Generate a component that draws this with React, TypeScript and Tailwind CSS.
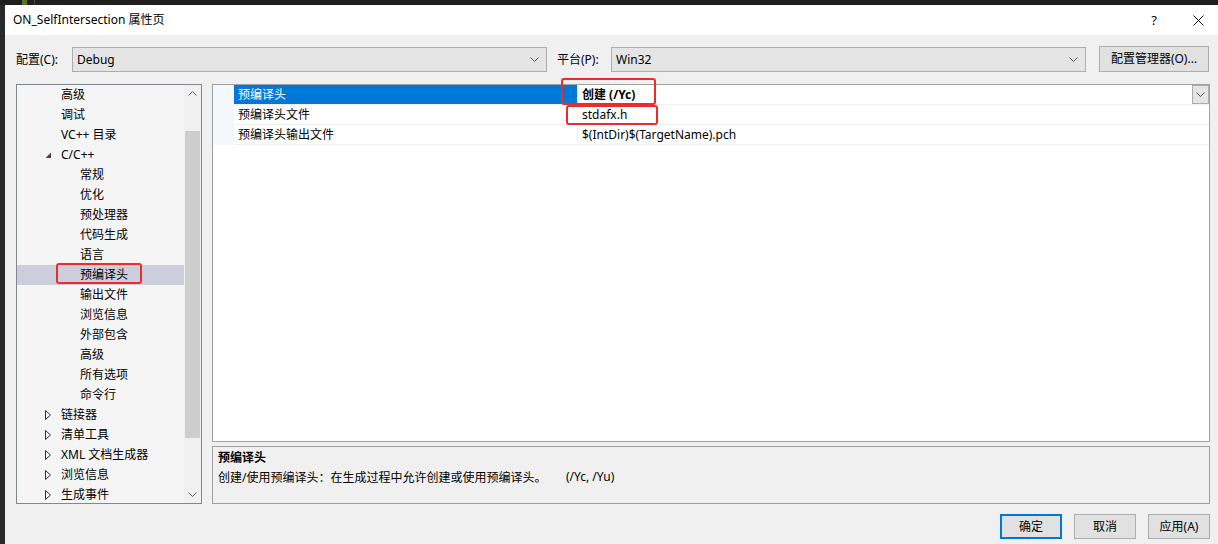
import React from "react";

type TreeItem = { label: string; level: 1 | 2; arrow?: "open" | "closed"; selected?: boolean };

const treeItems: TreeItem[] = [
  { label: "高级", level: 1 },
  { label: "调试", level: 1 },
  { label: "VC++ 目录", level: 1 },
  { label: "C/C++", level: 1, arrow: "open" },
  { label: "常规", level: 2 },
  { label: "优化", level: 2 },
  { label: "预处理器", level: 2 },
  { label: "代码生成", level: 2 },
  { label: "语言", level: 2 },
  { label: "预编译头", level: 2, selected: true },
  { label: "输出文件", level: 2 },
  { label: "浏览信息", level: 2 },
  { label: "外部包含", level: 2 },
  { label: "高级", level: 2 },
  { label: "所有选项", level: 2 },
  { label: "命令行", level: 2 },
  { label: "链接器", level: 1, arrow: "closed" },
  { label: "清单工具", level: 1, arrow: "closed" },
  { label: "XML 文档生成器", level: 1, arrow: "closed" },
  { label: "浏览信息", level: 1, arrow: "closed" },
  { label: "生成事件", level: 1, arrow: "closed" },
];

const props = [
  { name: "预编译头", value: "创建 (/Yc)", selected: true },
  { name: "预编译头文件", value: "stdafx.h" },
  { name: "预编译头输出文件", value: "$(IntDir)$(TargetName).pch" },
];

function Chevron({ up = false, className = "" }: { up?: boolean; className?: string }) {
  return (
    <svg width="9" height="5" viewBox="0 0 9 5" className={className}>
      <polyline
        points={up ? "0.5,4.5 4.5,0.5 8.5,4.5" : "0.5,0.5 4.5,4.5 8.5,0.5"}
        fill="none"
        stroke="currentColor"
        strokeWidth="1"
      />
    </svg>
  );
}

function Combo({ text, width }: { text: string; width: string }) {
  return (
    <div className={`${width} h-[25px] flex items-center justify-between border border-[#adadad] bg-[#e5e5e5] pl-[4px] pr-[7px]`}>
      <span>{text}</span>
      <Chevron className="text-[#555]" />
    </div>
  );
}

function Arrow({ kind }: { kind?: "open" | "closed" }) {
  if (kind === "open")
    return (
      <svg width="7" height="7" viewBox="0 0 7 7">
        <polygon points="6,0.5 6,6 0.5,6" fill="#444" />
      </svg>
    );
  if (kind === "closed")
    return (
      <svg width="7" height="10" viewBox="0 0 7 10">
        <polygon points="0.5,0.5 5.5,5 0.5,9.5" fill="none" stroke="#333" strokeWidth="1" />
      </svg>
    );
  return null;
}

function Tree() {
  return (
    <div className="w-[186px] h-[420px] flex border border-[#828790] bg-[#f5f5f5]">
      <div className="flex-1 overflow-hidden">
        {treeItems.map((it, i) => (
          <div
            key={i}
            className={`relative h-[20px] flex items-center ${it.level === 1 ? "pl-[28px]" : "pl-[47px]"} ${it.selected ? "bg-[#cccedb]" : ""}`}
          >
            <span className="w-[16px] flex items-center">
              <Arrow kind={it.arrow} />
            </span>
            <span className="whitespace-nowrap">{it.label}</span>
            {it.selected && (
              <div className="absolute left-[39px] top-[-2px] w-[86px] h-[21px] border-2 border-[#ee2b2b] rounded-[3px]" />
            )}
          </div>
        ))}
      </div>
      {/* scrollbar */}
      <div className="w-[17px] flex flex-col bg-[#f0f0f0]">
        <div className="h-[17px] flex items-center justify-center text-[#606060]">
          <Chevron up />
        </div>
        <div className="flex-1 px-[1px]">
          <div className="mt-[29px] h-[307px] bg-[#cdcdcd]" />
        </div>
        <div className="h-[17px] flex items-center justify-center text-[#606060]">
          <Chevron />
        </div>
      </div>
    </div>
  );
}

function PropertyGrid() {
  return (
    <div className="relative h-[358px] border border-[#a0a0a0] bg-white">
      <div>
        {props.map((p, i) => (
          <div key={i} className="flex h-[20px]">
            <div className="w-[21px] bg-[#f4f7fc]" />
            <div className="flex-1 flex border-b border-[#f0f0f0]">
              <div
                className={`w-[343px] pl-[4px] flex items-center ${p.selected ? "bg-[#0078d7] text-white" : ""}`}
              >
                {p.name}
              </div>
              <div className="flex-1 flex items-center justify-between border-l border-[#f0f0f0] pl-[4px]">
                <span className={p.selected ? "font-bold" : ""}>{p.value}</span>
                {p.selected && (
                  <div className="w-[17px] h-[19px] flex items-center justify-center border border-[#adadad] bg-[#e5e5e5] text-[#555]">
                    <Chevron />
                  </div>
                )}
              </div>
            </div>
          </div>
        ))}
      </div>
      {/* annotations */}
      <div className="absolute left-[348px] top-[-7px] w-[95px] h-[27px] border-2 border-[#ee2b2b] rounded-[3px]" />
      <div className="absolute left-[353px] top-[20px] w-[92px] h-[20px] border-2 border-[#ee2b2b] rounded-[3px]" />
    </div>
  );
}

function Btn({ children, primary = false }: { children: React.ReactNode; primary?: boolean }) {
  return (
    <div
      className={`w-[62px] h-[25px] flex items-center justify-center bg-[#e1e1e1] ${primary ? "border-2 border-[#0078d7]" : "border border-[#adadad]"}`}
    >
      {children}
    </div>
  );
}

export default function App() {
  return (
    <div className="w-[1218px] h-[544px] flex flex-col overflow-hidden bg-[#1f1f1f] text-[12px] leading-[16px] text-black font-['Noto_Sans','Noto_Sans_CJK_SC',sans-serif]">
      {/* host window edge */}
      <div className="h-[5px] flex pl-[22px]">
        <div className="w-[5px] bg-[#56742a]" />
        <div className="ml-[7px] w-[1px] bg-[#4a4a4a]" />
      </div>
      <div className="flex flex-1">
        <div className="w-[5px] bg-[#2a2a2c]" />
        <div className="flex-1 flex flex-col bg-[#f0f0f0]">
          {/* title bar */}
          <div className="h-[30px] flex items-center bg-white pl-[8px]">
            <span className="flex-1">ON_SelfIntersection 属性页</span>
            <div className="w-[44px] flex justify-center text-[13px]">?</div>
            <div className="w-[44px] flex justify-center mr-[-2px]">
              <svg width="11" height="11" viewBox="0 0 11 11">
                <path d="M0.5 0.5 L10.5 10.5 M10.5 0.5 L0.5 10.5" stroke="#111" strokeWidth="1" />
              </svg>
            </div>
          </div>

          <div className="flex-1 flex flex-col pl-[11px] pr-[8px]">
            {/* config row */}
            <div className="mt-[12px] h-[25px] flex items-center">
              <span className="w-[56px]">配置(C):</span>
              <Combo text="Debug" width="w-[475px]" />
              <span className="ml-[10px] w-[54px]">平台(P):</span>
              <Combo text="Win32" width="w-[475px]" />
              <div className="ml-[13px] w-[110px] h-[26px] mt-[-1px] flex items-center justify-center border border-[#adadad] bg-[#e1e1e1]">
                配置管理器(O)...
              </div>
            </div>

            {/* panels */}
            <div className="mt-[12px] flex gap-[10px]">
              <Tree />
              <div className="flex-1 flex flex-col gap-[4px]">
                <PropertyGrid />
                <div className="h-[58px] border border-[#a0a0a0] pl-[5px] pt-[1px] leading-[19px]">
                  <div className="font-bold">预编译头</div>
                  <div className="flex">
                    <span className="w-[348px]">
                      创建/使用预编译头<span className="font-['Noto_Sans_CJK_SC',sans-serif]">：</span>在生成过程中允许创建或使用预编译头。
                    </span>
                    <span>(/Yc, /Yu)</span>
                  </div>
                </div>
              </div>
            </div>

            {/* buttons */}
            <div className="mt-[10px] flex justify-end gap-[12px]">
              <Btn primary>确定</Btn>
              <Btn>取消</Btn>
              <Btn>应用(A)</Btn>
            </div>
          </div>
        </div>
      </div>
    </div>
  );
}
